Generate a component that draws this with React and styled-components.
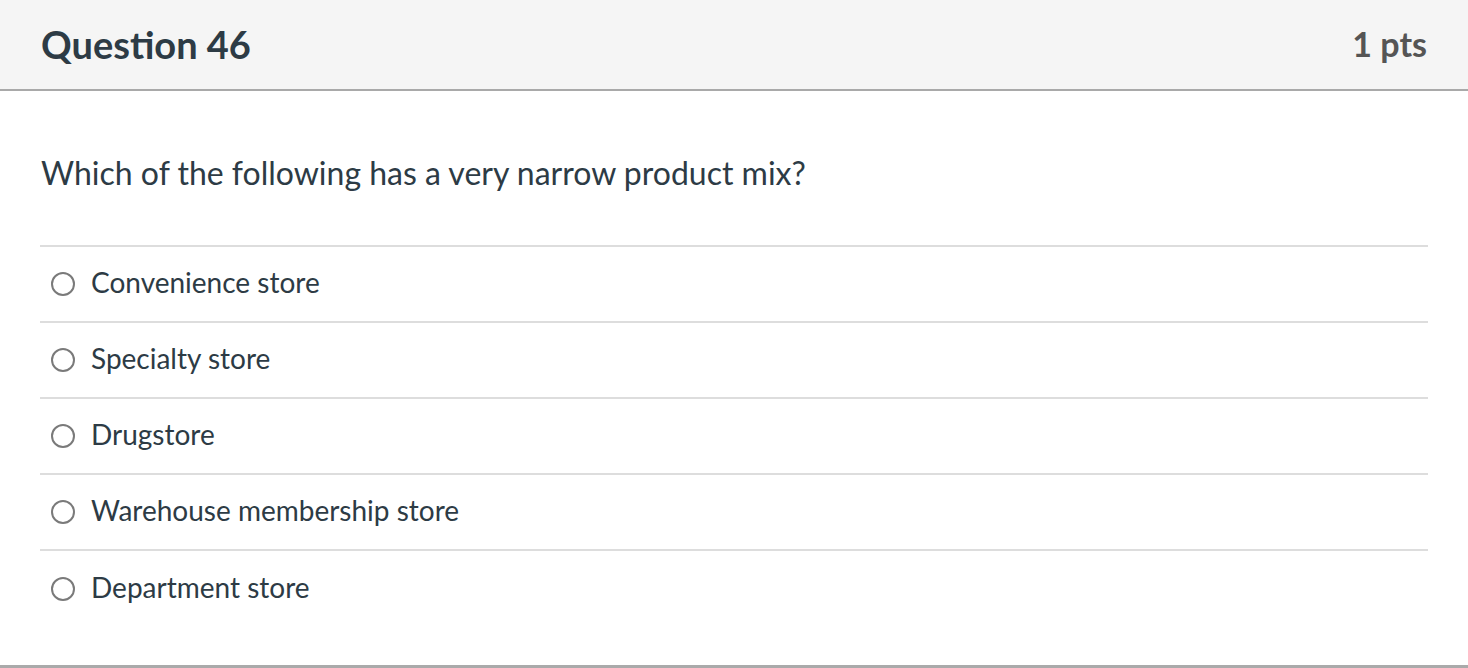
import React from "react";
import styled, { createGlobalStyle } from "styled-components";

const Global = createGlobalStyle`
  body {
    margin: 0;
    background: #fff;
    font-family: Lato, "Open Sans", sans-serif;
    color: #2d3b45;
  }
`;

const Card = styled.div`
  width: 1468px;
  height: 668px;
  box-sizing: border-box;
  border-bottom: 3px solid #aaaaaa;
  display: flex;
  flex-direction: column;
`;

const Header = styled.div`
  height: 91px;
  box-sizing: border-box;
  background: #f5f5f5;
  border-bottom: 2px solid #a9a9a9;
  padding: 0 41px 2px;
  display: flex;
  align-items: center;
  justify-content: space-between;
`;

const Title = styled.h2`
  margin: 0;
  font-size: 38px;
  font-weight: 700;
  color: #2d3b45;
`;

const Points = styled.span`
  font-size: 34px;
  font-weight: 700;
  color: #555555;
`;

const Body = styled.div`
  padding: 0 40px;
`;

const Prompt = styled.p`
  margin: 0;
  padding: 62px 1px 0;
  height: 154px;
  box-sizing: border-box;
  font-size: 32px;
  line-height: 40px;
`;

const Answers = styled.div`
  border-top: 2px solid #dddddd;
`;

const Answer = styled.label`
  height: 76px;
  box-sizing: border-box;
  border-bottom: 2px solid #dddddd;
  display: flex;
  align-items: center;
  gap: 16px;
  padding: 0 0 4px 11px;
  font-size: 28px;
  color: #2d3b45;

  &:last-child {
    border-bottom: none;
  }
`;

const Radio = styled.span`
  width: 24px;
  height: 24px;
  border: 2px solid #7a7a7a;
  border-radius: 50%;
  box-sizing: border-box;
  flex: none;
  margin-top: 4px;
`;

const options = [
  "Convenience store",
  "Specialty store",
  "Drugstore",
  "Warehouse membership store",
  "Department store",
];

export default function App() {
  return (
    <>
      <Global />
      <Card>
        <Header>
          <Title>Question 46</Title>
          <Points>1 pts</Points>
        </Header>
        <Body>
          <Prompt>Which of the following has a very narrow product mix?</Prompt>
          <Answers>
            {options.map((o) => (
              <Answer key={o}>
                <Radio />
                {o}
              </Answer>
            ))}
          </Answers>
        </Body>
      </Card>
    </>
  );
}
